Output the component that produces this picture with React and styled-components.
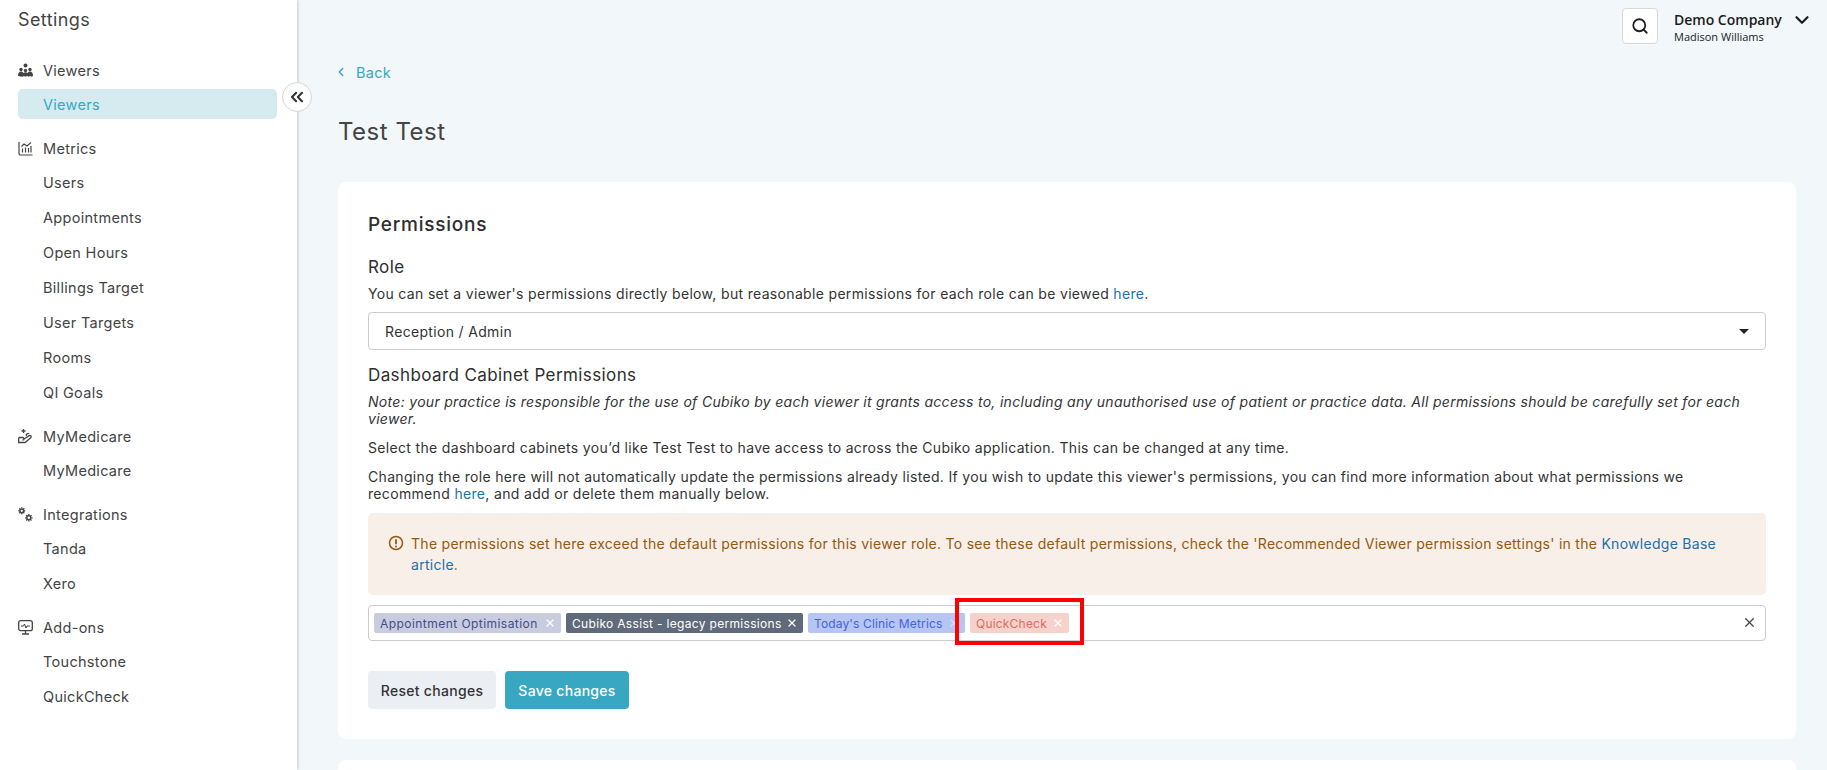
import styled, {createGlobalStyle} from "styled-components";
import {ChevronLeft, ChevronsLeft, ChevronDown, Search, X} from "lucide-react";

const GlobalStyle = createGlobalStyle`
  html, body {
    margin: 0;
    height: 100%;
    overflow: hidden;
  }
  body {
    background: #f2f7fa;
    font-family: "Inter", "Liberation Sans", sans-serif;
    color: #3d3d3d;
  }
`;

const Page = styled.div`
  display: flex;
  height: 770px;
  overflow: hidden;
`;

const Sidebar = styled.aside`
  position: relative;
  flex: 0 0 297px;
  background: #fff;
  box-shadow: 1px 0 3px rgba(0, 0, 0, 0.18);
  padding: 8px 20px 0 18px;
  box-sizing: border-box;
`;

const SidebarTitle = styled.div`
  font-size: 18px;
  line-height: 24px;
  letter-spacing: 0.4px;
  color: #444;
  margin-bottom: 23px;
`;

const Group = styled.div`
  margin-bottom: 14px;
`;

const GroupHead = styled.div`
  display: flex;
  align-items: center;
  gap: 10px;
  height: 30px;
  margin-bottom: 4px;
  font-size: 14.5px;
  letter-spacing: 0.3px;
  color: #444;

  & svg {
    flex: 0 0 15px;
  }
`;

const NavItem = styled.div`
  height: 30px;
  margin-bottom: 5px;
  padding-left: 25px;
  display: flex;
  align-items: center;
  border-radius: 5px;
  font-size: 14.5px;
  letter-spacing: 0.3px;
  color: ${(p) => (p.$active ? "#38a7c1" : "#444")};
  background: ${(p) => (p.$active ? "#d5ebf0" : "transparent")};
`;

const CollapseButton = styled.button`
  position: absolute;
  left: 282px;
  top: 82px;
  width: 30px;
  height: 30px;
  padding: 0;
  border-radius: 50%;
  border: 1px solid #d5d5d5;
  background: #fff;
  color: #333;
  display: flex;
  align-items: center;
  justify-content: center;
`;

const Main = styled.main`
  flex: 1;
  min-width: 0;
  padding: 8px 31px 0 41px;
`;

const TopBar = styled.div`
  display: flex;
  justify-content: flex-end;
  align-items: center;
  gap: 16px;
  height: 36px;
  margin-right: -14px;

  & > svg {
    align-self: flex-start;
    margin: 1px -3px 0 -9px;
  }
`;

const SearchButton = styled.button`
  width: 36px;
  height: 36px;
  padding: 0;
  background: #fff;
  border: 1px solid #d9d9d9;
  border-radius: 4px;
  color: #222;
  display: flex;
  align-items: center;
  justify-content: center;
`;

const Account = styled.div`
  font-family: "Open Sans", sans-serif;
  color: #1c1c1c;
  width: 110px;
  padding-top: 2px;
`;

const Company = styled.div`
  font-size: 14px;
  font-weight: 600;
  line-height: 19px;
`;

const UserName = styled.div`
  font-size: 11px;
  line-height: 15px;
`;

const BackLink = styled.div`
  display: flex;
  align-items: center;
  gap: 8px;
  margin: 18px 0 0 -4px;
  height: 20px;
  font-size: 14.5px;
  letter-spacing: 0.3px;
  color: #38a7c1;
`;

const PageTitle = styled.h1`
  margin: 34px 0 0;
  font-size: 24px;
  line-height: 32px;
  font-weight: 400;
  letter-spacing: 0.5px;
  color: #444;
`;

const Card = styled.section`
  background: #fff;
  border-radius: 8px;
  padding: 30px;
  margin-top: 34px;
  height: 557px;
  box-sizing: border-box;
`;

const NextCard = styled.section`
  background: #fff;
  border-radius: 8px;
  margin-top: 21px;
  height: 60px;
`;

const CardTitle = styled.h2`
  margin: 1px 0 18px;
  font-size: 19px;
  line-height: 24px;
  font-weight: 500;
  letter-spacing: 0.75px;
  color: #2e2e2e;
`;

const SectionTitle = styled.h3`
  margin: 0 0 6px;
  font-size: 17px;
  line-height: 24px;
  font-weight: 400;
  letter-spacing: 0.4px;
  color: #2e2e2e;
`;

const Text = styled.p`
  margin: 0 0 ${(p) => p.$gap || 0}px;
  font-size: 14px;
  line-height: 17px;
  letter-spacing: ${(p) => (p.$italic ? 0.3 : 0.33)}px;
  color: #333;
  font-style: ${(p) => (p.$italic ? "italic" : "normal")};
`;

const Link = styled.span`
  color: #1e6fa8;
`;

const Select = styled.div`
  height: 38px;
  margin: 10px 0 13px;
  padding: 0 16px;
  box-sizing: border-box;
  border: 1px solid #ccc;
  border-radius: 4px;
  display: flex;
  align-items: center;
  justify-content: space-between;
  font-size: 14px;
  letter-spacing: 0.33px;
  color: #333;
`;

const Caret = styled.span`
  width: 0;
  height: 0;
  border-left: 5px solid transparent;
  border-right: 5px solid transparent;
  border-top: 5px solid #222;
`;

const Alert = styled.div`
  display: flex;
  gap: 7px;
  height: 82px;
  box-sizing: border-box;
  margin-top: 11px;
  padding: 20px;
  background: #f8f0e8;
  border-radius: 5px;
  font-size: 14px;
  line-height: 21px;
  letter-spacing: 0.28px;
  color: #96570f;

  & svg {
    flex: 0 0 16px;
    margin-top: 2px;
  }
`;

const TagBox = styled.div`
  height: 36px;
  margin-top: 10px;
  padding: 0 5px;
  box-sizing: border-box;
  border: 1px solid #ccc;
  border-radius: 4px;
  display: flex;
  align-items: center;
  gap: 5px;
`;

const Tag = styled.span`
  position: relative;
  box-sizing: border-box;
  width: ${(p) => p.$w}px;
  height: 20px;
  padding: 0 5px 0 6px;
  border-radius: 2px;
  display: flex;
  align-items: center;
  justify-content: space-between;
  font-size: 12px;
  letter-spacing: ${(p) => p.$ls}px;
  color: ${(p) => p.$fg};
  background: ${(p) => p.$bg};

  & svg {
    color: ${(p) => p.$x};
  }
`;

const Highlight = styled.span`
  position: absolute;
  left: -15px;
  right: -15px;
  top: -15px;
  bottom: -12px;
  border: 4px solid #ff0000;
  pointer-events: none;
`;

const ClearButton = styled.span`
  margin-left: auto;
  margin-right: 3px;
  margin-top: -2px;
  display: flex;
  color: #444;
`;

const Actions = styled.div`
  display: flex;
  gap: 9px;
  margin-top: 30px;
`;

const Button = styled.button`
  height: 38px;
  width: ${(p) => p.$w}px;
  padding: 0;
  border: none;
  border-radius: 4px;
  font: 500 14px "Inter", sans-serif;
  letter-spacing: 0.3px;
  color: ${(p) => (p.$primary ? "#fff" : "#333")};
  background: ${(p) => (p.$primary ? "#38a7c1" : "#ebeef3")};
`;

const ViewersIcon = () => (
  <svg width="15" height="15" viewBox="0 0 15 15" fill="#444">
    <circle cx="7.5" cy="2.5" r="2" />
    <circle cx="3" cy="6.5" r="1.7" />
    <circle cx="12" cy="6.5" r="1.7" />
    <circle cx="7.5" cy="7.5" r="1.7" />
    <path d="M0 13c0-3 1-4.500 3-4.500 1.300 0 2 .6 2.400 1.500.5-.6 1.200-.8 2.100-.8s1.600.2 2.100.8c.4-.9 1.100-1.500 2.400-1.500 2 0 3 1.500 3 4.500l-1.500.8-1.500-.8-1.500.8-1.500-.8-1.500.8-1.500-.8-1.500.8z" />
  </svg>
);

const MetricsIcon = () => (
  <svg width="15" height="15" viewBox="0 0 15 15" fill="none" stroke="#444" strokeWidth="1.2">
    <path d="M1 1v11.500a1.500 1.500 0 0 0 1.500 1.500H14.500" />
    <path d="M3.500 5.500 6 3l3 2 4-3.500" />
    <path d="M4.500 11.500V7.500M7.500 11.500V6.500M10.500 11.500V7M13 11.500V5" />
  </svg>
);

const MedicareIcon = () => (
  <svg width="15" height="15" viewBox="0 0 15 15" fill="none" stroke="#444" strokeWidth="1.300">
    <path d="M5.500 0v4M3.500 2h4" />
    <path d="M.7 8.500h3.800c1 0 1.500.6 1.500 1.300s-.5 1.200-1.500 1.200" />
    <path d="M.7 8.500v5h6.300l5.500-4.500c1.500-1.300.4-3.200-1.200-2.400L6 10" />
    <path d="M8.500 7c-.8-1.600 1-3.200 2.700-2.300" />
  </svg>
);

const IntegrationsIcon = () => (
  <svg width="15" height="15" viewBox="0 0 15 15" fill="none" stroke="#444">
    <circle cx="3.800" cy="3.800" r="1.900" strokeWidth="1.500" />
    <path d="M3.800.3v1.200M3.800 6v1.200M.3 3.800h1.200M6 3.800h1.200M1.300 1.300l.9.900M5.400 5.400l.9.900M6.300 1.300l-.9.900M2.200 5.400l-.9.900" strokeWidth="1.300" />
    <circle cx="10.800" cy="10.800" r="2" strokeWidth="1.500" />
    <path d="M10.800 7v1.300M10.800 13.300v1.300M7 10.800h1.300M13.300 10.800h1.300M8.100 8.100l1 1M12.500 12.500l1 1M13.500 8.100l-1 1M9.100 12.500l-1 1" strokeWidth="1.300" />
  </svg>
);

const AddonsIcon = () => (
  <svg width="15" height="15" viewBox="0 0 15 15" fill="none" stroke="#444" strokeWidth="1.300">
    <rect x=".7" y=".7" width="13.600" height="10" rx="2" />
    <path d="M3 6h2.500l1-2 1.500 4 1-2h3" strokeWidth="1" />
    <path d="M7.500 10.700v3M4 14h7" />
  </svg>
);

const AlertIcon = () => (
  <svg width="16" height="16" viewBox="0 0 16 16" fill="none" stroke="#96570f">
    <circle cx="8" cy="8" r="6.500" strokeWidth="1.500" />
    <path d="M8 4.200v5" strokeWidth="1.800" />
    <circle cx="8" cy="11.500" r="1" fill="#96570f" stroke="none" />
  </svg>
);

const nav = [
  {title: "Viewers", icon: <ViewersIcon />, items: ["Viewers"]},
  {
    title: "Metrics",
    icon: <MetricsIcon />,
    items: ["Users", "Appointments", "Open Hours", "Billings Target", "User Targets", "Rooms", "QI Goals"],
  },
  {title: "MyMedicare", icon: <MedicareIcon />, items: ["MyMedicare"]},
  {title: "Integrations", icon: <IntegrationsIcon />, items: ["Tanda", "Xero"]},
  {title: "Add-ons", icon: <AddonsIcon />, items: ["Touchstone", "QuickCheck"]},
];

const tags = [
  {label: "Appointment Optimisation", w: 187, ls: 0.45, bg: "#c9ccdf", fg: "#424d8c", x: "#fff"},
  {label: "Cubiko Assist - legacy permissions", w: 237, ls: 0.32, bg: "#5f6a7a", fg: "#fff", x: "#fff"},
  {label: "Today's Clinic Metrics", w: 157, ls: 0.14, bg: "#b7c5f2", fg: "#4363dd", x: "#d5ddf8"},
  {label: "QuickCheck", w: 99, ls: 0.2, bg: "#f6d2cc", fg: "#dd6d5f", x: "#fff", marked: true},
];

export default function App() {
  return (
    <Page>
      <GlobalStyle />
      <Sidebar>
        <SidebarTitle>Settings</SidebarTitle>
        {nav.map((group, g) => (
          <Group key={group.title}>
            <GroupHead>
              {group.icon}
              {group.title}
            </GroupHead>
            {group.items.map((item) => (
              <NavItem key={item} $active={g === 0}>
                {item}
              </NavItem>
            ))}
          </Group>
        ))}
        <CollapseButton>
          <ChevronsLeft size={20} strokeWidth={2.5} />
        </CollapseButton>
      </Sidebar>
      <Main>
        <TopBar>
          <SearchButton>
            <Search size={18} strokeWidth={2.4} />
          </SearchButton>
          <Account>
            <Company>Demo Company</Company>
            <UserName>Madison Williams</UserName>
          </Account>
          <ChevronDown size={22} strokeWidth={2.4} color="#1c1c1c" />
        </TopBar>
        <BackLink>
          <ChevronLeft size={14} strokeWidth={2.4} />
          Back
        </BackLink>
        <PageTitle>Test Test</PageTitle>
        <Card>
          <CardTitle>Permissions</CardTitle>
          <SectionTitle>Role</SectionTitle>
          <Text>
            You can set a viewer's permissions directly below, but reasonable permissions for each role can be
            viewed <Link>here</Link>.
          </Text>
          <Select>
            Reception / Admin
            <Caret />
          </Select>
          <SectionTitle>Dashboard Cabinet Permissions</SectionTitle>
          <Text $italic $gap={12}>
            Note: your practice is responsible for the use of Cubiko by each viewer it grants access to, including
            any unauthorised use of patient or practice data. All permissions should be carefully set for each
            viewer.
          </Text>
          <Text $gap={12}>
            Select the dashboard cabinets you’d like Test Test to have access to across the Cubiko application. This
            can be changed at any time.
          </Text>
          <Text>
            Changing the role here will not automatically update the permissions already listed. If you wish to
            update this viewer's permissions, you can find more information about what permissions we
            recommend <Link>here</Link>, and add or delete them manually below.
          </Text>
          <Alert>
            <AlertIcon />
            <div>
              The permissions set here exceed the default permissions for this viewer role. To see these default
              permissions, check the 'Recommended Viewer permission settings' in the <Link>Knowledge Base
              article</Link>.
            </div>
          </Alert>
          <TagBox>
            {tags.map((tag) => (
              <Tag key={tag.label} $w={tag.w} $ls={tag.ls} $bg={tag.bg} $fg={tag.fg} $x={tag.x}>
                {tag.label}
                <X size={12} strokeWidth={2.4} />
                {tag.marked && <Highlight />}
              </Tag>
            ))}
            <ClearButton>
              <X size={15} strokeWidth={2} />
            </ClearButton>
          </TagBox>
          <Actions>
            <Button $w={128}>Reset changes</Button>
            <Button $w={124} $primary>
              Save changes
            </Button>
          </Actions>
        </Card>
        <NextCard />
      </Main>
    </Page>
  );
}
